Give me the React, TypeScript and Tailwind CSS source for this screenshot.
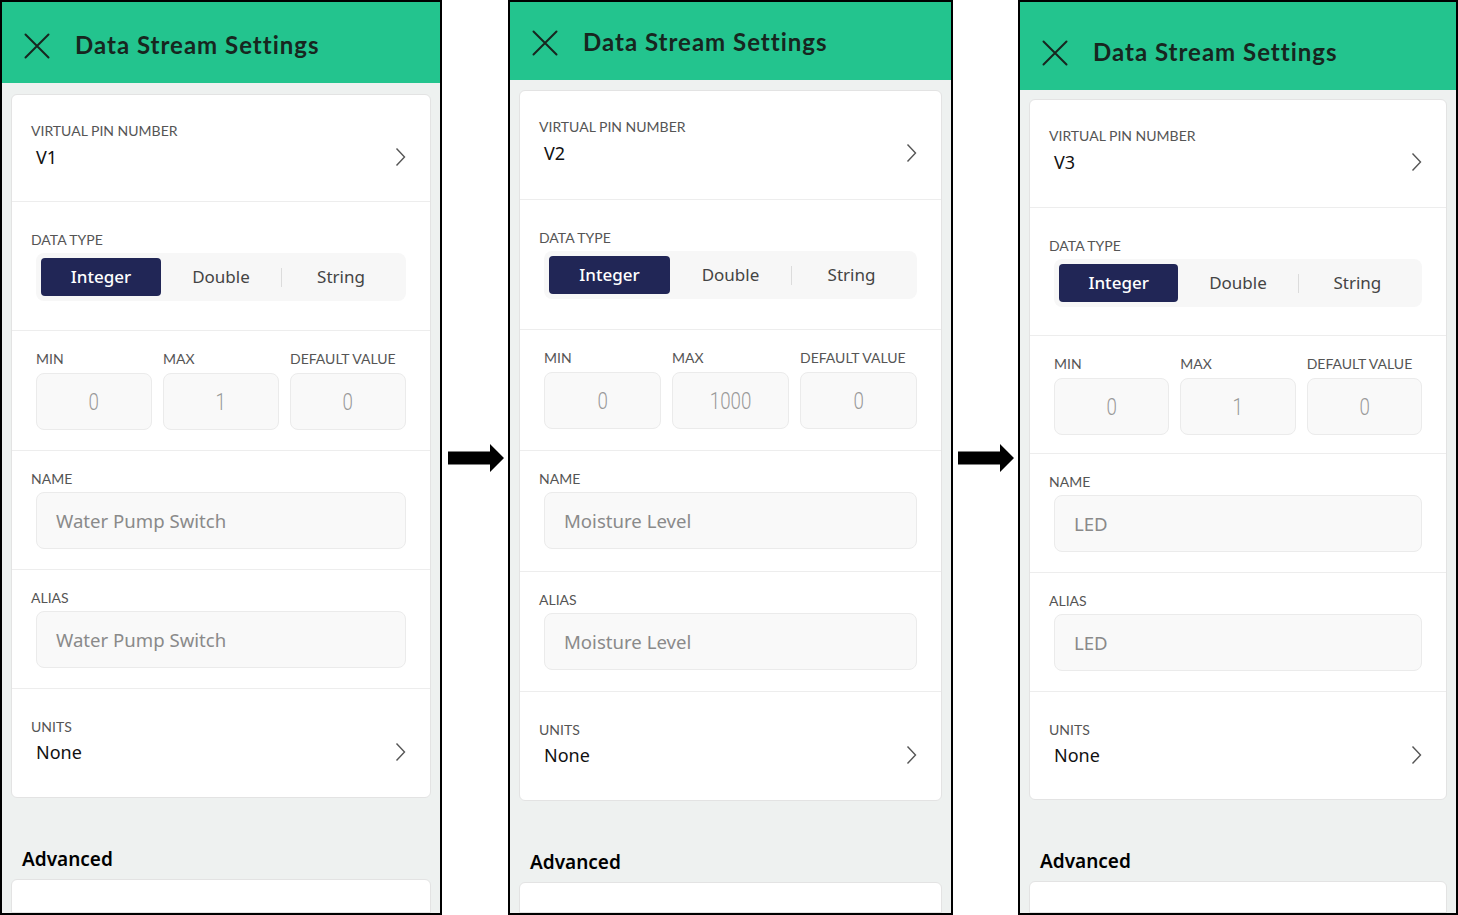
import { clsx } from "clsx";

const panels = [
  {
    pin: "V1",
    max: "1",
    name: "Water Pump Switch",
    width: "w-[442px]",
    header: "h-[81px]",
    gap: "mt-[11px]",
    rows: ["h-[106px]", "h-[129px]", "h-[120px]", "h-[119px]", "h-[119px]", "h-[109px]"],
  },
  {
    pin: "V2",
    max: "1000",
    name: "Moisture Level",
    width: "w-[445px]",
    header: "h-[78px]",
    gap: "mt-[10px]",
    rows: ["h-[108px]", "h-[130px]", "h-[121px]", "h-[121px]", "h-[120px]", "h-[109px]"],
  },
  {
    pin: "V3",
    max: "1",
    name: "LED",
    width: "w-[440px]",
    header: "h-[88px]",
    gap: "mt-[9px]",
    rows: ["h-[107px]", "h-[128px]", "h-[118px]", "h-[119px]", "h-[119px]", "h-[108px]"],
  },
];

const labelCls = "font-['Lato',sans-serif] text-[14px] leading-[18px] text-[#555] uppercase";
const valueCls = "font-['Noto_Sans',sans-serif] text-[18px] leading-[24px] text-[#111]";

function Chevron() {
  return (
    <svg width="11" height="20" viewBox="0 0 11 20" className="shrink-0">
      <polyline points="1.5,1.5 9.5,10 1.5,18.5" fill="none" stroke="#555" strokeWidth="1.4" />
    </svg>
  );
}

function CloseIcon() {
  return (
    <svg width="26" height="26" viewBox="0 0 26 26" className="shrink-0">
      <path d="M1.5 1.5 L24.5 24.5 M24.5 1.5 L1.5 24.5" stroke="#17261f" strokeWidth="2" strokeLinecap="round" />
    </svg>
  );
}

function NumberBox({ value }: { value: string }) {
  return (
    <div className="h-[57px] rounded-[8px] border border-[#ebebeb] bg-[#f9f9f9] flex items-center justify-center">
      <span className="inline-block scale-x-[0.78] font-['Roboto',sans-serif] font-light text-[24px] text-[#9a9a9a]">
        {value}
      </span>
    </div>
  );
}

function TextBox({ value }: { value: string }) {
  return (
    <div className="h-[57px] rounded-[8px] border border-[#ebebeb] bg-[#f9f9f9] flex items-center pl-[19px] font-['Noto_Sans',sans-serif] text-[18.6px] text-[#8a8a8a]">
      {value}
    </div>
  );
}

function Phone({ pin, max, name, width, header, gap, rows }: (typeof panels)[number]) {
  return (
    <div className={clsx(width, "h-[915px] shrink-0 border-2 border-black bg-[#eef1f0] flex flex-col overflow-hidden")}>
      {/* Header */}
      <div className={clsx(header, "shrink-0 bg-[#23c48e] flex items-end pb-[24px] pl-[22px] gap-[25px]")}>
        <CloseIcon />
        <h1 className="font-['Lato',sans-serif] font-bold text-[24px] leading-[28px] tracking-[1px] text-[#17261f]">
          Data Stream Settings
        </h1>
      </div>

      <div className={clsx(gap, "mx-[9px] rounded-[6px] border border-[#e3e3e3] bg-white")}>
        {/* Virtual pin */}
        <div className={clsx(rows[0], "pl-[19px] pr-[24px] pt-[27px]")}>
          <div className={labelCls}>Virtual Pin Number</div>
          <div className="mt-[5px] flex items-center justify-between">
            <span className={clsx(valueCls, "ml-[5px]")}>{pin}</span>
            <Chevron />
          </div>
        </div>

        {/* Data type */}
        <div className={clsx(rows[1], "border-t border-[#ededed] px-[24px] pt-[29px]")}>
          <div className={clsx(labelCls, "-ml-[5px]")}>Data Type</div>
          <div className="mt-[4px] h-[48px] rounded-[8px] bg-[#f7f7f7] p-[5px] grid grid-cols-3 font-['Noto_Sans',sans-serif] text-[17px]">
            <div className="rounded-[4px] bg-[#212656] text-white flex items-center justify-center font-medium">Integer</div>
            <div className="flex items-center justify-center text-[#444]">Double</div>
            <div className="relative flex items-center justify-center text-[#444]">
              <span className="absolute left-0 top-[10px] h-[19px] border-l border-[#dcdcdc]" />
              String
            </div>
          </div>
        </div>

        {/* Min / max / default */}
        <div className={clsx(rows[2], "border-t border-[#ededed] px-[24px] pt-[19px]")}>
          <div className="grid grid-cols-3 gap-x-[11px]">
            <div className={labelCls}>Min</div>
            <div className={labelCls}>Max</div>
            <div className={labelCls}>Default Value</div>
          </div>
          <div className="mt-[5px] grid grid-cols-3 gap-x-[11px]">
            <NumberBox value="0" />
            <NumberBox value={max} />
            <NumberBox value="0" />
          </div>
        </div>

        {/* Name */}
        <div className={clsx(rows[3], "border-t border-[#ededed] pl-[19px] pr-[24px] pt-[19px]")}>
          <div className={labelCls}>Name</div>
          <div className="mt-[4px] ml-[5px]">
            <TextBox value={name} />
          </div>
        </div>

        {/* Alias */}
        <div className={clsx(rows[4], "border-t border-[#ededed] pl-[19px] pr-[24px] pt-[19px]")}>
          <div className={labelCls}>Alias</div>
          <div className="mt-[4px] ml-[5px]">
            <TextBox value={name} />
          </div>
        </div>

        {/* Units */}
        <div className={clsx(rows[5], "border-t border-[#ededed] pl-[19px] pr-[24px] pt-[29px]")}>
          <div className={labelCls}>Units</div>
          <div className="mt-[4px] flex items-center justify-between">
            <span className={clsx(valueCls, "ml-[5px]")}>None</span>
            <Chevron />
          </div>
        </div>
      </div>

      <div className="pt-[49px] pb-[8px] pl-[20px] font-['Noto_Sans',sans-serif] font-semibold text-[19px] leading-[24px] text-black">
        Advanced
      </div>
      <div className="mx-[9px] flex-1 rounded-t-[6px] border border-[#e3e3e3] bg-white" />
    </div>
  );
}

function Arrow() {
  return (
    <div className="w-[56px] shrink-0 flex items-center justify-center">
      <svg width="56" height="28" viewBox="0 0 56 28">
        <polygon points="0,7.5 42,7.5 42,0 56,14 42,28 42,20.5 0,20.5" fill="#000" />
      </svg>
    </div>
  );
}

export default function App() {
  return (
    <div className="w-[1458px] h-[915px] bg-white flex items-start overflow-hidden">
      <Phone {...panels[0]} />
      <div className="ml-[6px] mr-[4px] self-center">
        <Arrow />
      </div>
      <Phone {...panels[1]} />
      <div className="ml-[5px] mr-[4px] self-center">
        <Arrow />
      </div>
      <Phone {...panels[2]} />
    </div>
  );
}
